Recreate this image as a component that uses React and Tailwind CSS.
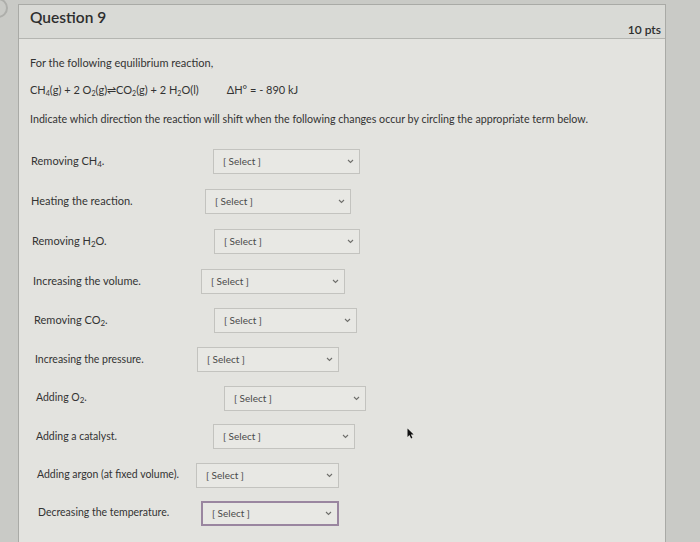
import React from "react";

const ROWS = [
  { label: <>Removing CH<sub className="text-[8px]">4</sub>.</>, ml: "ml-[12px]", lw: "w-[182px]", sw: "w-[147px]", h: "h-[40px]", fs: "text-[11px]" },
  { label: "Heating the reaction.", ml: "ml-[12px]", lw: "w-[174px]", sw: "w-[146px]", h: "h-[41px]", fs: "text-[11px]" },
  { label: <>Removing H<sub className="text-[8px]">2</sub>O.</>, ml: "ml-[13px]", lw: "w-[182px]", sw: "w-[146px]", h: "h-[39px]", fs: "text-[11px]" },
  { label: "Increasing the volume.", ml: "ml-[14px]", lw: "w-[168px]", sw: "w-[144px]", h: "h-[40px]", fs: "text-[11px]" },
  { label: <>Removing CO<sub className="text-[8px]">2</sub>.</>, ml: "ml-[15px]", lw: "w-[180px]", sw: "w-[143px]", h: "h-[39px]", fs: "text-[11px]" },
  { label: "Increasing the pressure.", ml: "ml-[16px]", lw: "w-[162px]", sw: "w-[142px]", h: "h-[39px]", fs: "text-[10.5px]" },
  { label: <>Adding O<sub className="text-[8px]">2</sub>.</>, ml: "ml-[17px]", lw: "w-[188px]", sw: "w-[142px]", h: "h-[38px]", fs: "text-[10.5px]" },
  { label: "Adding a catalyst.", ml: "ml-[17px]", lw: "w-[177px]", sw: "w-[142px]", h: "h-[39px]", fs: "text-[10.5px]" },
  { label: "Adding argon (at fixed volume).", ml: "ml-[18px]", lw: "w-[159px]", sw: "w-[143px]", h: "h-[38px]", fs: "text-[10.5px]" },
  { label: "Decreasing the temperature.", ml: "ml-[19px]", lw: "w-[163px]", sw: "w-[138px]", h: "h-[38px]", fs: "text-[10.5px]", focus: true },
];

function Chevron() {
  return (
    <svg width="7" height="5" viewBox="0 0 7 5" className="shrink-0">
      <path d="M1 1l2.5 2.5L6 1" fill="none" stroke="#6f6f6c" strokeWidth="1.1" />
    </svg>
  );
}

function SelectBox({ width, focus }) {
  return (
    <div
      className={`${width} h-[25px] flex items-center justify-between pl-[9px] pr-[5px] bg-[#e8e8e4] ${
        focus ? "border-2 border-[#9a86a0]" : "border border-[#c3c3bf]"
      }`}
    >
      <span className="text-[10px] text-[#4a4a4a]">[ Select ]</span>
      <Chevron />
    </div>
  );
}

export default function App() {
  return (
    <div className="relative w-[700px] h-[542px] overflow-hidden bg-[#c9cac6] font-['Lato','Noto_Sans',sans-serif] text-[#3a3a3a]">
      {/* partial circle at the far left */}
      <div className="absolute left-[-12px] top-[-2px] w-[20px] h-[20px] rounded-full border-2 border-[#aeafab]" />

      <div className="absolute left-[18px] top-[4px] w-[648px] h-[560px] border border-[#a9aaa6] bg-[#e3e3df]">
        {/* header */}
        <div className="h-[34px] flex justify-between bg-[#d9dad6] border-b border-[#b4b5b1] pl-[11px] pr-[4px]">
          <span className="pt-[1px] text-[15.5px] font-semibold text-[#2e2e2e]">Question 9</span>
          <span className="pt-[16px] text-[12px] font-semibold text-[#2e2e2e]">10 pts</span>
        </div>

        {/* body */}
        <div className="pt-[16px] pl-[11px] text-[11px] text-[#333]">
          <div className="leading-[16px]">For the following equilibrium reaction,</div>
          <div className="mt-[11px] leading-[16px] flex">
            <span>
              CH<sub className="text-[7px]">4</sub>(g) + 2 O<sub className="text-[7px]">2</sub>(g)⇌CO
              <sub className="text-[7px]">2</sub>(g) + 2 H<sub className="text-[7px]">2</sub>O(l)
            </span>
            <span className="ml-[28px]">ΔH° = - 890 kJ</span>
          </div>
          <div className="mt-[13px] leading-[16px] text-[10.7px]">
            Indicate which direction the reaction will shift when the following changes occur by circling the appropriate term below.
          </div>
        </div>

        <div className="mt-[14px]">
          {ROWS.map((r, i) => (
            <div key={i} className={`flex items-center ${r.h}`}>
              <div className={`${r.ml} ${r.lw} ${r.fs} text-[#333] shrink-0`}>{r.label}</div>
              <SelectBox width={r.sw} focus={r.focus} />
            </div>
          ))}
        </div>
      </div>

      {/* mouse cursor */}
      <svg className="absolute left-[407px] top-[428px]" width="8" height="11" viewBox="0 0 8 11">
        <path d="M0.5 0.5v8.5l2-2 1.6 3.4 1.3-.6-1.6-3.3h2.8z" fill="#111" />
      </svg>
    </div>
  );
}
